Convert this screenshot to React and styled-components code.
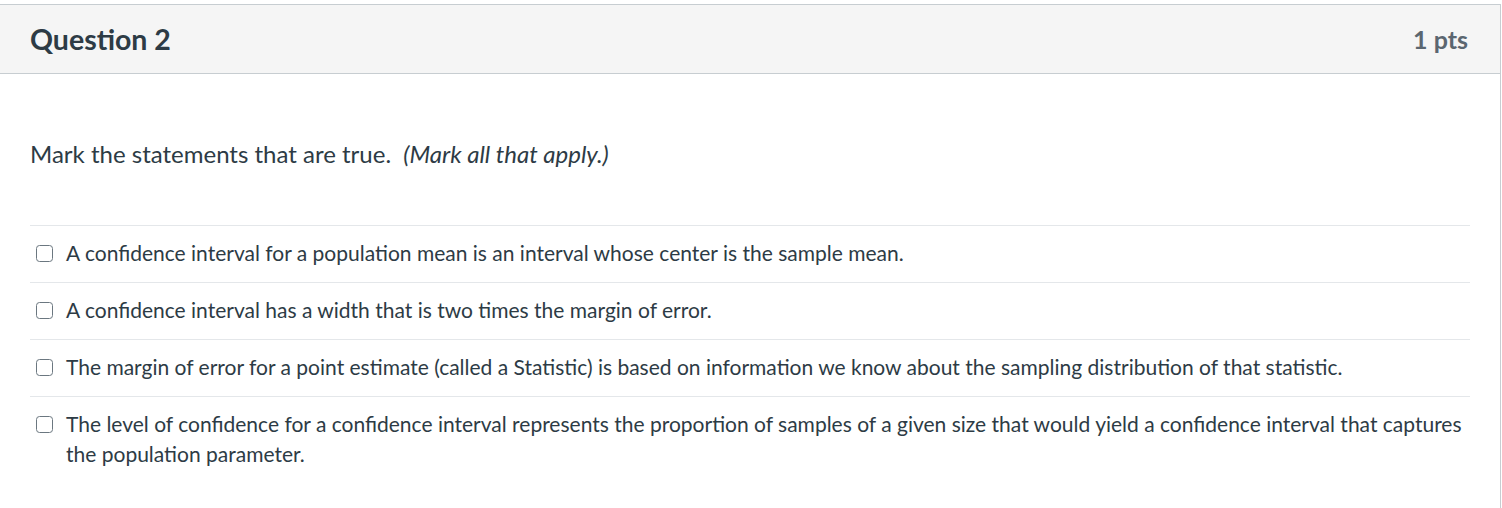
import React from 'react'
import styled, { createGlobalStyle } from 'styled-components';

const Global = createGlobalStyle`
    body{
        margin:0;
        background:#ffffff;
        font-family:Lato, 'Liberation Sans', sans-serif;
        color:#2d3b45;
    }
`;

const QuestionCard = styled.div`
    box-sizing:border-box;
    width:1502px;
    margin:4px 0 0 -1px;
    border:1px solid #c7cdd1;
    border-bottom:none;
    background:#ffffff;
`;

const Header = styled.div`
    height:68px;
    display:flex;
    align-items:center;
    justify-content:space-between;
    padding:0 32px 0 30px;
    background:#f5f5f5;
    border-bottom:1px solid #c7cdd1;
`;

const Title = styled.h2`
    margin:0;
    font-size:28.5px;
    font-weight:700;
    color:#2d3b45;
`;

const Points = styled.div`
    font-size:25px;
    font-weight:700;
    color:#5b6670;
`;

const Body = styled.div`
    padding:65px 30px 30px 30px;
`;

const Prompt = styled.p`
    margin:0 0 56px 0;
    font-size:24px;
    line-height:30px;
    em{
        margin-left:6px;
    }
`;

const Answers = styled.div`
    border-top:1px solid #e4e7ea;
`;

const Answer = styled.label`
    display:flex;
    align-items:flex-start;
    padding:12px 0 14px 0;
    border-bottom:1px solid ${p => p.last ? 'transparent' : '#e4e7ea'};
    font-size:21px;
    line-height:30px;
`;

const Box = styled.span`
    flex:none;
    box-sizing:border-box;
    width:17px;
    height:17px;
    margin:7px 13px 0 6px;
    border:1.5px solid #6b7780;
    border-radius:3.5px;
    background:#ffffff;
`;

const answers = [
    'A confidence interval for a population mean is an interval whose center is the sample mean.',
    'A confidence interval has a width that is two times the margin of error.',
    'The margin of error for a point estimate (called a Statistic) is based on information we know about the sampling distribution of that statistic.',
    'The level of confidence for a confidence interval represents the proportion of samples of a given size that would yield a confidence interval that captures the population parameter.',
];

export default function App() {
    return (
        <>
            <Global />
            <QuestionCard>
                <Header>
                    <Title>Question 2</Title>
                    <Points>1 pts</Points>
                </Header>
                <Body>
                    <Prompt>Mark the statements that are true. <em>(Mark all that apply.)</em></Prompt>
                    <Answers>
                        {answers.map((a, i) => (
                            <Answer key={i} last={i === answers.length - 1}>
                                <Box />
                                <span>{a}</span>
                            </Answer>
                        ))}
                    </Answers>
                </Body>
            </QuestionCard>
        </>
    )
}
